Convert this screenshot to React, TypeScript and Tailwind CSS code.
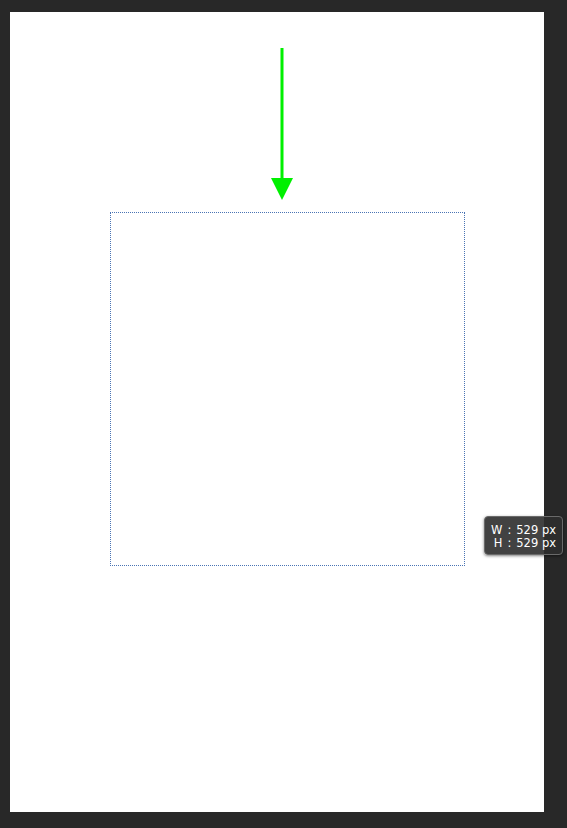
import React from 'react';

// Size readout shown next to the selection
const SizeTooltip: React.FC<{ w: number; h: number }> = ({ w, h }) => {
  return (
    <div className="absolute left-[484px] top-[516px] w-[79px] h-[39px] rounded-[4px] border border-[#6a6a6a] bg-[#2e2e2e]/90 shadow-[0_1px_3px_rgba(0,0,0,0.5)] flex flex-col items-end justify-center pt-[3px] pr-[6px] text-white text-[11.5px] leading-[13px] font-['DejaVu_Sans',sans-serif]">
      <div>
        W<span className="mx-[5px]">:</span>{w} px
      </div>
      <div>
        H<span className="mx-[5px]">:</span>{h} px
      </div>
    </div>
  );
};

const App: React.FC = () => {
  return (
    <div className="relative w-[567px] h-[828px] bg-[#282828] overflow-hidden pl-[10px] pt-[12px]">
      {/* Document canvas */}
      <div className="w-[534px] h-[800px] bg-white flex flex-col items-start pt-[36px]">
        {/* Down arrow */}
        <svg className="ml-[260px]" width="24" height="152" viewBox="0 0 24 152">
          <rect x="10.5" y="0" width="3" height="132" fill="#00f000" />
          <polygon points="1,130 23,130 12,152" fill="#00f000" />
        </svg>

        {/* Selection box */}
        <div className="ml-[100px] mt-[12px] w-[355px] h-[354px] border border-dotted border-[#4a74b4]" />
      </div>

      <SizeTooltip w={529} h={529} />
    </div>
  );
};

export default App;
